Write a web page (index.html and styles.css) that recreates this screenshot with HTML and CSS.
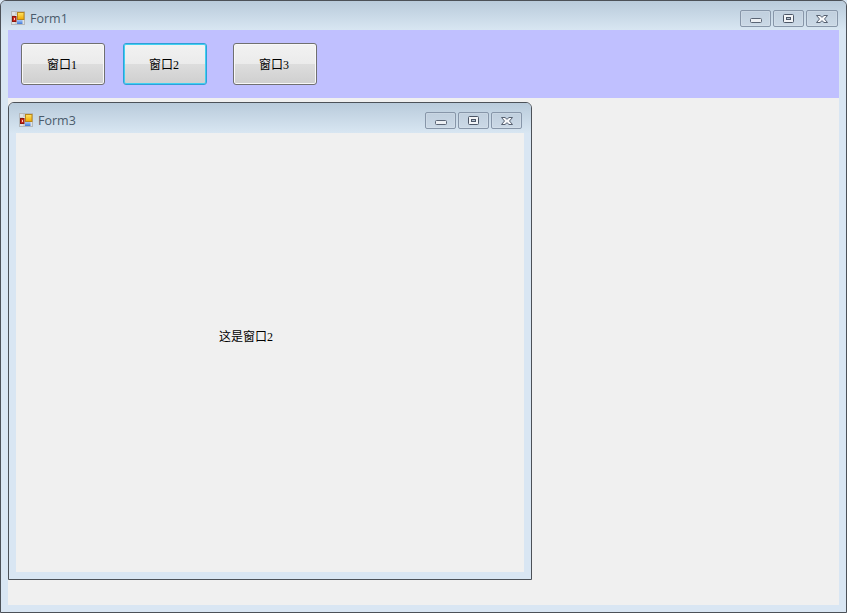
FILE: index.html
```html
<!DOCTYPE html>
<html lang="zh">
<head>
<meta charset="utf-8">
<title>Form1</title>
<link rel="stylesheet" href="styles.css">
</head>
<body>
<svg class="defs" width="0" height="0" aria-hidden="true">
  <defs>
    <linearGradient id="yel" x1="0" y1="0" x2="0" y2="1"><stop offset="0" stop-color="#ffe566"/><stop offset="1" stop-color="#f0a800"/></linearGradient>
    <linearGradient id="blu" x1="0" y1="0" x2="0" y2="1"><stop offset="0" stop-color="#a9c8f5"/><stop offset="1" stop-color="#3f78d8"/></linearGradient>
    <symbol id="app" viewBox="0 0 14 14">
      <rect x=".5" y=".5" width="13" height="13" fill="#dfe2e4" stroke="#b4b8bb"/>
      <path d="M5 1v3M1 5h3M1 10h3M5 11v2" stroke="#b4b8bb" stroke-width="1" fill="none"/>
      <rect x="1.500" y="5.500" width="3.500" height="5" fill="#d0281c" stroke="#8a160c"/>
      <rect x="3" y="7" width="1" height="2" fill="#fbd0c0"/>
      <rect x="6.500" y="1.500" width="6.500" height="7" fill="url(#yel)" stroke="#b8861a"/>
      <rect x="6" y="9" width="5.500" height="4" fill="url(#blu)"/>
    </symbol>
    <symbol id="min" viewBox="0 0 12 5"><rect x=".5" y=".5" width="11" height="4" rx="1" fill="#eceff3" stroke="#5a6474"/></symbol>
    <symbol id="max" viewBox="0 0 11 9"><rect x=".5" y=".5" width="10" height="8" rx="1" fill="#f2f4f7" stroke="#4c5666"/><rect x="3.500" y="3.500" width="4" height="2" fill="#b5c2d0" stroke="#4c5666"/></symbol>
    <symbol id="cls" viewBox="0 0 12 8"><path d="M.5.500h3.500L6 2.300 8 .5h3.500L8.500 4l3 3.500H8L6 5.700 4 7.500H.5L3.500 4z" fill="#f8f9fb" stroke="#566070" stroke-linejoin="round"/></symbol>
  </defs>
</svg>
<div class="window form1">
  <header class="titlebar">
    <svg class="app-icon"><use href="#app"/></svg>
    <span class="title">Form1</span>
    <div class="controls">
      <span class="ctl"><svg class="g-min"><use href="#min"/></svg></span>
      <span class="ctl"><svg class="g-max"><use href="#max"/></svg></span>
      <span class="ctl ctl-close"><svg class="g-cls"><use href="#cls"/></svg></span>
    </div>
  </header>
  <div class="client">
    <div class="toolbar">
      <button class="btn">窗口1</button>
      <button class="btn btn-focus">窗口2</button>
      <button class="btn btn-third">窗口3</button>
    </div>
    <div class="mdi">
      <div class="window form3">
        <header class="titlebar">
          <svg class="app-icon"><use href="#app"/></svg>
          <span class="title">Form3</span>
          <div class="controls">
            <span class="ctl"><svg class="g-min"><use href="#min"/></svg></span>
            <span class="ctl"><svg class="g-max"><use href="#max"/></svg></span>
            <span class="ctl"><svg class="g-cls"><use href="#cls"/></svg></span>
          </div>
        </header>
        <div class="client child-client">
          <span class="label">这是窗口2</span>
        </div>
      </div>
    </div>
  </div>
</div>
</body>
</html>
```
FILE: styles.css
```css
* { box-sizing: border-box; }
html, body { margin: 0; height: 100%; }
body { width: 847px; height: 613px; overflow: hidden; background: #d9e6f3; font-family: "Liberation Serif", "Noto Sans CJK SC", sans-serif; }
.defs { position: absolute; }

.window {
  display: flex;
  flex-direction: column;
  border: 1px solid #4c5158;
  background: #d9e6f3;
}
.form1 { width: 847px; height: 613px; border-radius: 6px 6px 0 0; padding: 0 7px 7px; }
.form3 { width: 524px; height: 478px; border-radius: 6px 6px 0 0; padding: 0 7px 7px; }

.titlebar {
  display: flex;
  align-items: flex-start;
  flex: none;
  margin: 0 -7px;
  padding: 9px 7px 0 10px;
  background: linear-gradient(#b9cbdb, #d8e6f2);
  border-radius: 5px 5px 0 0;
}
.form1 > .titlebar { height: 29px; }
.form3 > .titlebar { height: 30px; }

.app-icon { width: 14px; height: 14px; flex: none; margin-top: 1px; }
.title {
  margin-left: 5px;
  font: 12.500px/18px "Open Sans", "Liberation Sans", sans-serif;
  color: #4a5b6c;
}
.controls { display: flex; gap: 2px; margin-left: auto; margin-right: 1px; }
.form3 .controls { margin-right: 2px; }
.ctl {
  display: flex;
  align-items: center;
  justify-content: center;
  width: 31px;
  height: 17px;
  border: 1px solid #8796a9;
  border-radius: 2px;
  background: linear-gradient(#c0cfde, #cbd9e6);
  box-shadow: inset 0 0 0 1px rgba(255,255,255,.15);
}
.ctl-close { width: 32px; }
.g-min { width: 12px; height: 5px; margin-top: 4px; }
.g-max { width: 11px; height: 9px; }
.g-cls { width: 12px; height: 8px; }

.client { flex: 1; display: flex; flex-direction: column; background: #f0f0f0; min-height: 0; }

.toolbar {
  flex: none;
  height: 68px;
  display: flex;
  align-items: center;
  padding: 0 0 0 13px;
  gap: 18px;
  background: #c0c0ff;
}
.btn {
  width: 84px;
  height: 42px;
  padding: 0 2px 1px 0;
  border: 1px solid #707070;
  border-radius: 3px;
  background: linear-gradient(#f2f2f2 0, #ebebeb 49%, #dddddd 50%, #cfcfcf 100%);
  box-shadow: inset 0 0 0 1px #f8f8f8;
  font: 12px "Liberation Serif", "Noto Sans CJK SC", sans-serif;
  color: #000;
}
.btn-focus {
  border-color: #2f9fd8;
  box-shadow: inset 0 0 0 1px #3fd0f0;
}
.btn-third { margin-left: 8px; }

.mdi { flex: 1; padding-top: 4px; min-height: 0; }

.child-client { align-items: center; justify-content: center; }
.label { font: 12px "Liberation Serif", "Noto Sans CJK SC", sans-serif; color: #000; margin-top: -33px; margin-left: -48px; }
```
